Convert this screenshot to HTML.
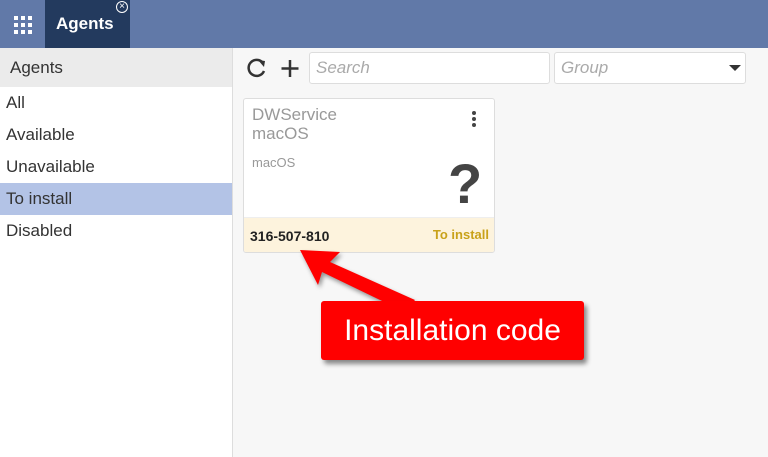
<html><body style="margin:0;width:768px;height:457px;overflow:hidden;font-family:'Liberation Sans',sans-serif;background:#f7f7f7;position:relative">
<div style="position:absolute;left:0;top:0;width:768px;height:48px;background:#6179a8"></div>
<div style="position:absolute;left:14px;top:16px;width:18px;height:18px;display:grid;grid-template-columns:repeat(3,4px);gap:3px">
<i style="background:#fff"></i><i style="background:#fff"></i><i style="background:#fff"></i><i style="background:#fff"></i><i style="background:#fff"></i><i style="background:#fff"></i><i style="background:#fff"></i><i style="background:#fff"></i><i style="background:#fff"></i></div>
<div style="position:absolute;left:45px;top:0;width:85px;height:48px;background:#233a5e;color:#fff;font-size:17px;font-weight:bold;line-height:48px;text-indent:11px">Agents</div>
<div style="position:absolute;left:116px;top:1px;width:10px;height:10px;border:1.5px solid #fff;border-radius:50%;color:#fff;font-size:10px;line-height:10px;text-align:center">×</div>
<div style="position:absolute;left:0;top:48px;width:232px;height:409px;background:#fff;border-right:1px solid #ddd"></div>
<div style="position:absolute;left:0;top:48px;width:232px;height:39px;background:#ebebeb;font-size:17px;line-height:39px;text-indent:10px;color:#333">Agents</div>
<div style="position:absolute;left:0;top:87px;width:232px;font-size:17px;color:#333">
<div style="height:32px;line-height:32px;padding-left:6px">All</div>
<div style="height:32px;line-height:32px;padding-left:6px">Available</div>
<div style="height:32px;line-height:32px;padding-left:6px">Unavailable</div>
<div style="height:32px;line-height:32px;padding-left:6px;background:#b3c3e6">To install</div>
<div style="height:32px;line-height:32px;padding-left:6px">Disabled</div></div>
<svg style="position:absolute;left:245px;top:57px" width="60" height="22"><path d="M18 6 A8 8 0 1 0 19 14" fill="none" stroke="#333" stroke-width="2.5"/><path d="M13 3 L20 4 L19 10 Z" fill="#333"/><path d="M45 3v17M36.5 11.5h17" stroke="#333" stroke-width="2.5"/></svg>
<div style="position:absolute;left:309px;top:52px;width:239px;height:30px;background:#fff;border:1px solid #ddd;border-radius:3px;font-size:17px;line-height:30px;text-indent:6px;color:#aaa;font-style:italic">Search</div>
<div style="position:absolute;left:554px;top:52px;width:190px;height:30px;background:#fff;border:1px solid #ddd;border-radius:3px;font-size:17px;line-height:30px;text-indent:6px;color:#aaa;font-style:italic">Group</div>
<div style="position:absolute;left:729px;top:65px;border:6px solid transparent;border-top:6px solid #333;border-bottom:0"></div>
<div style="position:absolute;left:243px;top:98px;width:250px;height:153px;background:#fff;border:1px solid #ddd;border-radius:3px;overflow:hidden">
<div style="position:absolute;left:8px;top:6px;font-size:17px;color:#999;line-height:19px">DWService<br>macOS</div>
<div style="position:absolute;left:8px;top:56px;font-size:13px;color:#999">macOS</div>
<div style="position:absolute;left:228px;top:12px;width:4px;height:4px;background:#444;border-radius:2px;box-shadow:0 6px #444,0 12px #444"></div>
<div style="position:absolute;left:204px;top:52px;font-size:56px;font-weight:bold;color:#444">?</div>
<div style="position:absolute;left:0;top:118px;width:250px;height:35px;background:#fdf3dd;border-top:1px solid #eee">
<span style="position:absolute;left:6px;top:10px;font-size:14px;font-weight:bold;color:#222">316-507-810</span>
<span style="position:absolute;right:5px;top:9px;font-size:13px;font-weight:bold;color:#c9a21a">To install</span></div></div>
<svg style="position:absolute;left:0;top:0" width="768" height="457"><polygon points="300,250 340,252 330,262 415,300 405,312 322,272 318,285" fill="#f00" style="filter:drop-shadow(2px 3px 2px rgba(0,0,0,.4))"/></svg>
<div style="position:absolute;left:321px;top:301px;width:263px;height:59px;background:#f00;border-radius:3px;box-shadow:3px 4px 5px rgba(0,0,0,.45);color:#fff;font-size:30px;line-height:59px;text-align:center">Installation code</div>
</body></html>
